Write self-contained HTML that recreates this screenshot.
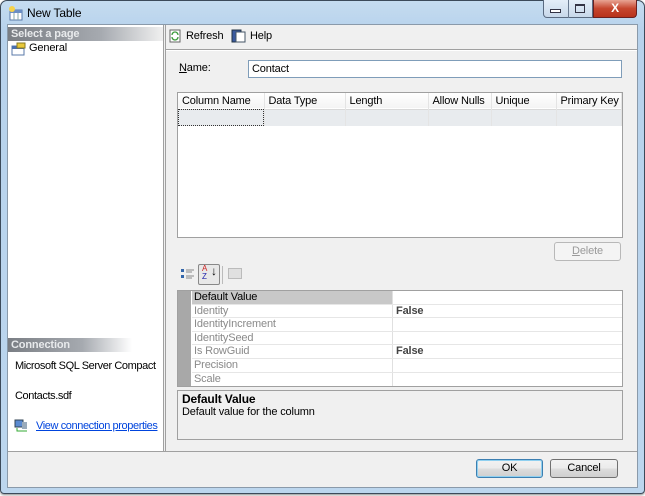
<!DOCTYPE html>
<html><head><style>
*{margin:0;padding:0;box-sizing:border-box}
body{width:645px;height:496px;overflow:hidden;background:#fff;font-family:"Liberation Sans",sans-serif;font-size:11px;color:#000;position:relative;letter-spacing:-0.15px}
.a{position:absolute}
.frame{left:0;top:0;width:645px;height:494px;border:1px solid #3c4a5a;border-radius:7px 7px 4px 4px;background:linear-gradient(#c5dcf0,#b7d2ec 30px,#bcd6ee);box-shadow:0 1px 2px #888}
.hdr{background:linear-gradient(90deg,#7a7e84,#a6aab0 60%,#f0f0f0);color:#e8eaec;font-weight:bold;font-size:11px;padding:1px 3px;height:14px;line-height:12px}
.grid{table-layout:fixed;white-space:nowrap}
.grid td{border-right:1px solid #e4e4e4;padding:0 4px;height:16px;overflow:hidden}
.btn{border:1px solid #707070;border-radius:3px;background:linear-gradient(#f2f2f2,#ebebeb 50%,#dddddd 51%,#cfcfcf);text-align:center;line-height:16px}
.pr{position:absolute;left:14px;right:0;height:13.6px;border-bottom:1px solid #e6e6e6;color:#8a8a8a;line-height:13px;padding-left:2px}
.pv{position:absolute;left:200px;top:0;bottom:0;right:0;border-left:1px solid #e0e0e0;padding-left:3px;color:#444;font-weight:bold}
</style></head><body>
<div class="a frame"></div>
<svg class="a" style="left:8px;top:5px" width="16" height="16"><rect x="2" y="5" width="12" height="10" fill="#fff" stroke="#5a7aa8"/><rect x="2" y="5" width="12" height="3" fill="#6c8fc4"/><line x1="6" y1="8" x2="6" y2="15" stroke="#8aa"/><line x1="10" y1="8" x2="10" y2="15" stroke="#8aa"/><circle cx="4" cy="4" r="3" fill="#f6d24a"/></svg>
<div class="a" style="left:27px;top:6px;font-size:12px;color:#000">New Table</div>
<div class="a" style="left:543px;top:0;width:50px;height:18px;border:1px solid #5a6a80;border-top:none;border-radius:0 0 0 4px;background:linear-gradient(#e4eef8,#c8d8ea)"></div>
<div class="a" style="left:568px;top:0;width:1px;height:18px;background:#6a7a90"></div>
<div class="a" style="left:550px;top:9px;width:11px;height:4px;border:1px solid #334;background:#fff"></div>
<div class="a" style="left:575px;top:4px;width:10px;height:9px;border:1px solid #334;border-top-width:2px"></div>
<div class="a" style="left:593px;top:0;width:44px;height:18px;border:1px solid #6a2020;border-top:none;border-radius:0 0 4px 0;background:linear-gradient(#e8a494,#c6462e 50%,#b8321c);color:#fff;font-weight:bold;text-align:center;font-size:12px;line-height:16px">X</div>
<div class="a" style="left:7px;top:24px;width:631px;height:464px;background:#f0f0f0;border:1px solid #8a9aaa"></div>
<div class="a" style="left:8px;top:25px;width:156px;height:426px;background:#fff;border-right:1px solid #a0a0a0"></div>
<div class="a hdr" style="left:8px;top:27px;width:155px">Select a page</div>
<svg class="a" style="left:11px;top:42px" width="16" height="14"><rect x="1" y="4" width="12" height="9" fill="#fff" stroke="#5a7aa8"/><rect x="1" y="4" width="12" height="3" fill="#4a70b0"/><path d="M6 1h8v5h-8z" fill="#e8c83a" stroke="#8a7a20"/></svg>
<div class="a" style="left:29px;top:42px">General</div>
<div class="a hdr" style="left:8px;top:338px;width:124px;background:linear-gradient(90deg,#7a7e84,#a6aab0 60%,#fff)">Connection</div>
<div class="a" style="left:15px;top:360px;letter-spacing:-0.4px">Microsoft SQL Server Compact</div>
<div class="a" style="left:15px;top:390px;letter-spacing:-0.4px">Contacts.sdf</div>
<svg class="a" style="left:14px;top:419px" width="16" height="14"><rect x="1" y="1" width="8" height="7" fill="#5a8ad0" stroke="#345"/><rect x="8" y="3" width="5" height="7" fill="#9ab"/><path d="M3 9v3h10" stroke="#3a3" fill="none"/></svg>
<div class="a" style="left:36px;top:420px;color:#0044dd;text-decoration:underline;letter-spacing:-0.4px">View connection properties</div>
<div class="a" style="left:165px;top:25px;width:472px;height:426px;border-left:1px solid #a0a0a0"></div>
<div class="a" style="left:166px;top:49px;width:471px;height:1px;background:#a0a0a0"></div>
<div class="a" style="left:166px;top:50px;width:471px;height:1px;background:#fff"></div>
<svg class="a" style="left:169px;top:29px" width="12" height="14"><rect x="1" y="1" width="10" height="12" fill="#fff" stroke="#666"/><path d="M3 6a3 3 0 0 1 6 0M9 8a3 3 0 0 1-6 0" stroke="#3a9a3a" fill="none" stroke-width="1.3"/></svg>
<div class="a" style="left:186px;top:30px">Refresh</div>
<svg class="a" style="left:231px;top:29px" width="16" height="14"><rect x="1" y="1" width="9" height="12" fill="#3a5aa0" stroke="#234"/><rect x="5" y="3" width="9" height="10" fill="#fff" stroke="#456"/></svg>
<div class="a" style="left:250px;top:30px">Help</div>
<div class="a" style="left:179px;top:62px"><u>N</u>ame:</div>
<div class="a" style="left:248px;top:60px;width:374px;height:18px;background:#fff;border:1px solid #7f9db9;padding:2px 3px;line-height:12px">Contact</div>
<div class="a" style="left:177px;top:92px;width:446px;height:146px;background:#fff;border:1px solid #a0a0a0"></div>
<table class="a grid" style="left:178px;top:93px;width:444px;border-collapse:collapse;font-size:11px">
<colgroup><col style="width:86px"><col style="width:81px"><col style="width:83px"><col style="width:63px"><col style="width:65px"><col></colgroup>
<tr style="background:linear-gradient(#fff,#f4f4f4);height:16px;border-bottom:1px solid #d8d8d8"><td>Column Name</td><td>Data Type</td><td>Length</td><td>Allow Nulls</td><td>Unique</td><td>Primary Key</td></tr>
<tr style="background:#e8ebee;height:17px"><td style="outline:1px dotted #333;outline-offset:-1px"></td><td></td><td></td><td></td><td></td><td></td></tr>
</table>
<div class="a btn" style="left:554px;top:242px;width:67px;height:19px;color:#9a9a9a;border-color:#b8b8b8;background:#f4f4f4"><u>D</u>elete</div>
<svg class="a" style="left:180px;top:267px" width="16" height="14"><rect x="1" y="2" width="3" height="3" fill="#36a" /><rect x="1" y="8" width="3" height="3" fill="#36a"/><path d="M6 3h8M6 5h6M6 9h8M6 11h6" stroke="#888"/></svg>
<div class="a" style="left:198px;top:264px;width:22px;height:21px;border:1px solid #888;border-radius:2px;background:#e8e8e8"></div>
<div class="a" style="left:202px;top:265px;font-size:8px;line-height:8px;color:#c22">A<br><span style="color:#22a">Z</span></div>
<div class="a" style="left:211px;top:264px;font-size:12px">↓</div>
<div class="a" style="left:222px;top:266px;width:1px;height:18px;background:#bbb"></div>
<div class="a" style="left:228px;top:268px;width:14px;height:11px;border:1px solid #bbb;background:#e0e0e0"></div>
<div class="a" style="left:177px;top:290px;width:446px;height:97px;background:#fff;border:1px solid #a0a0a0">
<div class="a" style="left:0;top:0;width:13px;height:95px;background:#a8a8a8"></div>
<div class="pr" style="top:0;background:#c8c8c8;color:#000">Default Value<div class="pv" style="background:#fff"></div></div>
<div class="pr" style="top:13.6px">Identity<div class="pv">False</div></div>
<div class="pr" style="top:27.2px">IdentityIncrement<div class="pv"></div></div>
<div class="pr" style="top:40.8px">IdentitySeed<div class="pv"></div></div>
<div class="pr" style="top:54.4px">Is RowGuid<div class="pv">False</div></div>
<div class="pr" style="top:68px">Precision<div class="pv"></div></div>
<div class="pr" style="top:81.6px;border-bottom:none">Scale<div class="pv"></div></div>
</div>
<div class="a" style="left:177px;top:390px;width:446px;height:50px;border:1px solid #a0a0a0;background:#f0f0f0;padding:2px 4px">
<div style="font-weight:bold;font-size:12px;line-height:13px">Default Value</div><div style="line-height:13px">Default value for the column</div></div>
<div class="a" style="left:8px;top:451px;width:629px;height:1px;background:#a0a0a0"></div>
<div class="a btn" style="left:476px;top:459px;width:67px;height:19px;border-color:#3c7fb1;box-shadow:inset 0 0 0 1px #8fd0f0">OK</div>
<div class="a btn" style="left:550px;top:459px;width:68px;height:19px">Cancel</div>
</body></html>
